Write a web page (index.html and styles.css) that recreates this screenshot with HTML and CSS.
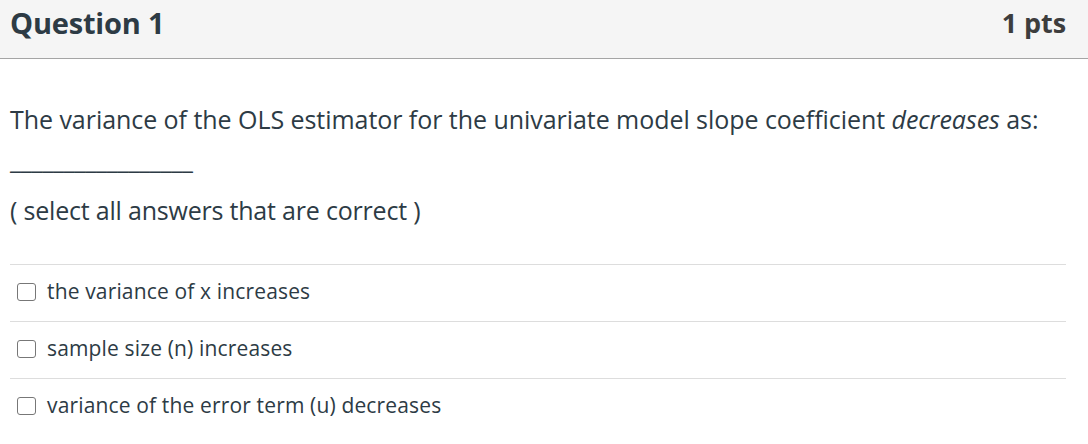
FILE: index.html
```html
<!DOCTYPE html>
<html lang="en">
<head>
<meta charset="utf-8">
<title>Question 1</title>
<link rel="stylesheet" href="styles.css">
</head>
<body>
<div class="question">
  <div class="header">
    <h2 class="title">Question 1</h2>
    <div class="pts">1 pts</div>
  </div>
  <div class="content">
    <p class="stem">The variance of the OLS estimator for the univariate model slope coefficient <em>decreases</em> as:</p>
    <p class="blank">_________________</p>
    <p class="note">( select all answers that are correct )</p>
    <div class="answers">
      <label class="answer"><span class="box"></span><span class="answer-text">the variance of x increases</span></label>
      <label class="answer"><span class="box"></span><span class="answer-text">sample size (n) increases</span></label>
      <label class="answer"><span class="box"></span><span class="answer-text">variance of the error term (u) decreases</span></label>
    </div>
  </div>
</div>
</body>
</html>
```

FILE: styles.css
```css
html, body {
  margin: 0;
  padding: 0;
  background: #ffffff;
}
body {
  font-family: "Open Sans", "Noto Sans", sans-serif;
  color: #2d3b45;
  font-variant-ligatures: none;
}
.question {
  width: 1088px;
}
.header {
  background: #f5f5f5;
  border-bottom: 1px solid #a5a5a5;
  display: flex;
  align-items: flex-start;
  justify-content: space-between;
  padding: 3px 22px 0 10px;
  box-sizing: border-box;
  height: 59px;
}
.title {
  margin: 0;
  font-size: 29px;
  font-weight: 700;
  line-height: 40px;
  letter-spacing: -0.2px;
}
.pts {
  font-size: 27px;
  font-weight: 700;
  color: #3d3d3d;
  line-height: 40px;
  letter-spacing: -0.1px;
}
.content {
  padding: 40px 22px 0 10px;
}
.stem, .blank, .note {
  margin: 0;
  font-size: 25px;
  line-height: 40px;
}
.stem {
  letter-spacing: -0.05px;
}
.blank {
  letter-spacing: -0.2px;
}
.note {
  margin-top: 11px;
  letter-spacing: -0.2px;
}
.answers {
  margin-top: 34px;
}
.answer {
  display: flex;
  align-items: center;
  gap: 11px;
  height: 52px;
  box-sizing: content-box;
  padding: 0 0 4px 7px;
  border-top: 1px solid #dddddd;
  font-size: 21px;
  letter-spacing: 0.15px;
}
.box {
  width: 17px;
  height: 16px;
  margin-top: 2px;
  border: 1px solid #777;
  border-radius: 3px;
  background: #fff;
  flex: none;
}
```
